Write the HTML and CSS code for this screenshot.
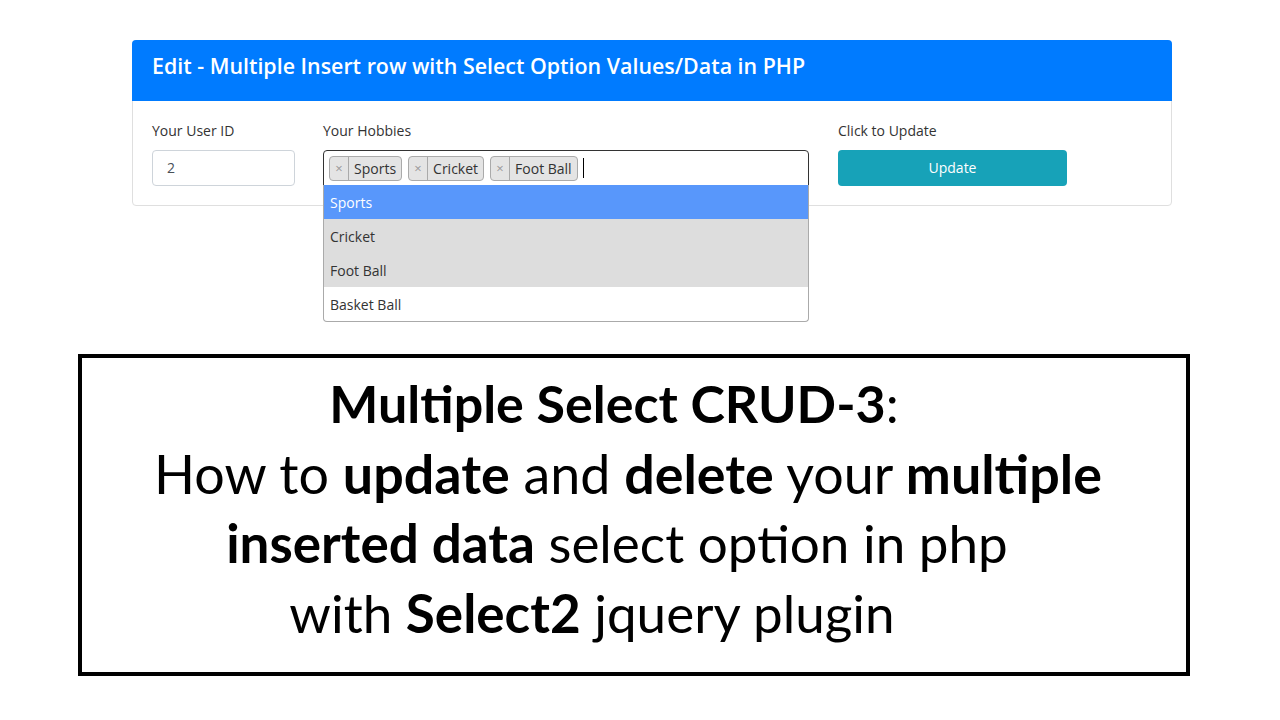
FILE: index.html
```html
<!DOCTYPE html>
<html>
<head>
<meta charset="utf-8">
<link rel="stylesheet" href="styles.css">
</head>
<body>
<div class="page">
  <div class="card">
    <div class="card-header">Edit - Multiple Insert row with Select Option Values/Data in PHP</div>
    <div class="card-body">
      <div class="field f-id">
        <label>Your User ID</label>
        <div class="input">2</div>
      </div>
      <div class="field f-hob">
        <label>Your Hobbies</label>
        <div class="select2">
          <div class="sel-box">
            <span class="tag"><span class="x">×</span><span class="t">Sports</span></span>
            <span class="tag"><span class="x">×</span><span class="t">Cricket</span></span>
            <span class="tag"><span class="x">×</span><span class="t">Foot Ball</span></span>
            <span class="caret"></span>
          </div>
          <ul class="dropdown">
            <li class="hl">Sports</li>
            <li class="sel">Cricket</li>
            <li class="sel">Foot Ball</li>
            <li>Basket Ball</li>
          </ul>
        </div>
      </div>
      <div class="field f-btn">
        <label>Click to Update</label>
        <div class="btn">Update</div>
      </div>
    </div>
  </div>

  <div class="banner">
    <p class="l1"><b>Multiple Select CRUD-3</b>:</p>
    <p class="l2">How to <b>update</b> and <b>delete</b> your <b>multiple</b></p>
    <p class="l3"><b>inserted data</b> select option in php</p>
    <p class="l4">with <b>Select2</b> jquery plugin</p>
  </div>
</div>
</body>
</html>
```

FILE: styles.css
```css
* { box-sizing: border-box; }
html, body { margin: 0; padding: 0; background: #fff; }
body { font-family: "Open Sans", "Noto Sans", sans-serif; color: #212529; }
.page { width: 1280px; height: 720px; padding-top: 40px; }

.card {
  margin-left: 132px;
  width: 1040px;
  border: 1px solid #dfdfdf;
  border-radius: 4px;
}
.card-header {
  background: #007bff;
  color: #fff;
  height: 61px;
  margin: -1px -1px 0 -1px;
  border-radius: 4px 4px 0 0;
  padding: 11px 20px 0 20px;
  font-size: 21.4px;
  font-weight: 600;
}
.card-body {
  display: flex;
  padding: 20px 19px 19px 19px;
  height: 104px;
}
.field label {
  display: block;
  font-size: 14px;
  color: #333;
  margin: 0 0 9px 0;
  line-height: 20px;
}
.f-id { width: 143px; margin-right: 28px; }
.f-hob { width: 486px; margin-right: 29px; }
.f-btn { width: 229px; }

.input {
  height: 36px;
  border: 1px solid #ced4da;
  border-radius: 4px;
  padding: 7px 14px;
  font-size: 14px;
  color: #495057;
}

.select2 { position: relative; }
.sel-box {
  height: 36px;
  border: 1px solid #333;
  border-radius: 4px 4px 0 0;
  padding: 5px 5px;
  display: flex;
  align-items: center;
  gap: 6px;
}
.tag {
  display: inline-flex;
  height: 25px;
  border: 1px solid #aaa;
  border-radius: 4px;
  background: #e4e4e4;
  font-size: 14px;
  color: #333;
  align-items: stretch;
  line-height: 23px;
}
.tag .x {
  width: 19px;
  text-align: center;
  color: #999;
  font-size: 13px;
  border-right: 1px solid #aaa;
}
.tag .t { padding: 0 5px 0 5px; }
.caret {
  width: 1px;
  height: 20px;
  background: #000;
  margin-left: -1px;
}

.dropdown {
  position: absolute;
  left: 0;
  top: 35px;
  width: 486px;
  margin: 0;
  padding: 0;
  list-style: none;
  border: 1px solid #aaa;
  border-top: none;
  border-radius: 0 0 4px 4px;
  background: #fff;
  overflow: hidden;
}
.dropdown li {
  height: 34px;
  line-height: 35px;
  padding: 0 6px;
  font-size: 14px;
  color: #333;
}
.dropdown li.hl { background: #5897fb; color: #fff; }
.dropdown li.sel { background: #ddd; }

.btn {
  height: 36px;
  background: #17a2b8;
  border-radius: 4px;
  color: #fff;
  font-size: 14px;
  text-align: center;
  line-height: 36px;
}

.banner {
  margin: 148px 0 0 78px;
  width: 1112px;
  height: 322px;
  border: 4px solid #000;
  text-align: center;
  font-family: "Lato", "Open Sans", sans-serif;
  color: #000;
  font-size: 53px;
  padding-top: 10px;
}
.banner p { margin: 0; line-height: 70px; }
.banner b { font-weight: 700; }
.l1 { padding-right: 40px; font-size: 52px; }
.l2 { padding-right: 12px; font-size: 53.8px; }
.l3 { padding-right: 34px; }
.l4 { padding-right: 84px; line-height: 68px; }
```
